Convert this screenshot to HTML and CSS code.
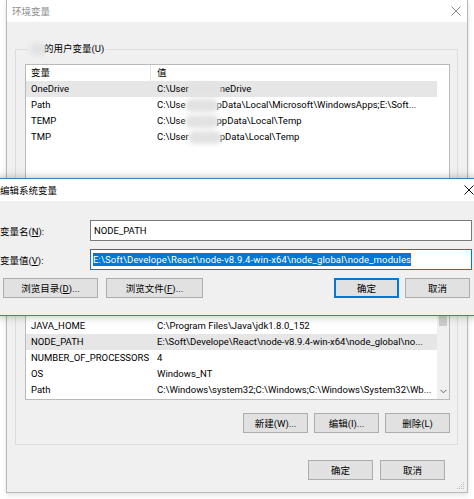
FILE: index.html
```html
<!DOCTYPE html>
<html lang="zh-CN">
<head>
    <meta charset="UTF-8">
    <title>环境变量</title>
    <link rel="stylesheet" href="styles.css">
</head>
<body>
    <!-- 环境变量 (背后的窗口) -->
    <div class="window env">
        <div class="titlebar">
            <span class="title">环境变量</span>
            <svg class="close" width="10" height="10" viewBox="0 0 10 10"><path d="M0.5 0.5 L9.5 9.5 M9.5 0.5 L0.5 9.5" stroke="#8a8a8a" stroke-width="1" fill="none"/></svg>
        </div>
        <div class="win-body">
            <fieldset class="group user-group">
                <legend><span class="blur blur-legend"></span>的用户变量(U)</legend>
                <div class="list user-list">
                    <div class="list-rows">
                        <div class="list-head"><span class="col-name">变量</span><span class="col-value">值</span></div>
                        <div class="row selected"><span class="col-name">OneDrive</span><span class="col-value">C:\User<span class="blur"></span>neDrive</span></div>
                        <div class="row"><span class="col-name">Path</span><span class="col-value">C:\Use<span class="blur"></span>pData\Local\Microsoft\WindowsApps;E:\Soft...</span></div>
                        <div class="row"><span class="col-name">TEMP</span><span class="col-value">C:\Use<span class="blur"></span>ppData\Local\Temp</span></div>
                        <div class="row"><span class="col-name">TMP</span><span class="col-value">C:\User<span class="blur"></span>pData\Local\Temp</span></div>
                    </div>
                </div>
                <div class="group-buttons">
                    <button>新建(N)...</button>
                    <button>编辑(E)...</button>
                    <button>删除(D)</button>
                </div>
            </fieldset>

            <fieldset class="group sys-group">
                <legend>系统变量(S)</legend>
                <div class="list sys-list">
                    <div class="list-rows">
                        <div class="list-head"><span class="col-name">变量</span><span class="col-value">值</span></div>
                        <div class="row"><span class="col-name">ComSpec</span><span class="col-value">C:\Windows\system32\cmd.exe</span></div>
                        <div class="row"><span class="col-name">DriverData</span><span class="col-value">C:\Windows\System32\Drivers\DriverData</span></div>
                        <div class="row"><span class="col-name">JAVA_HOME</span><span class="col-value">C:\Program Files\Java\jdk1.8.0_152</span></div>
                        <div class="row selected"><span class="col-name">NODE_PATH</span><span class="col-value">E:\Soft\Develope\React\node-v8.9.4-win-x64\node_global\no...</span></div>
                        <div class="row"><span class="col-name">NUMBER_OF_PROCESSORS</span><span class="col-value">4</span></div>
                        <div class="row"><span class="col-name">OS</span><span class="col-value">Windows_NT</span></div>
                        <div class="row"><span class="col-name">Path</span><span class="col-value">C:\Windows\system32;C:\Windows;C:\Windows\System32\Wb...</span></div>
                    </div>
                    <div class="scrollbar">
                        <span class="thumb"></span>
                        <svg class="arrow" width="7" height="5" viewBox="0 0 7 5"><path d="M0.5 0.8 L3.5 3.8 L6.5 0.8" stroke="#606060" stroke-width="1" fill="none"/></svg>
                    </div>
                </div>
                <div class="group-buttons">
                    <button>新建(W)...</button>
                    <button>编辑(I)...</button>
                    <button>删除(L)</button>
                </div>
            </fieldset>

            <div class="dialog-buttons">
                <button>确定</button>
                <button>取消</button>
            </div>
        </div>
        <svg class="grip" width="8" height="8" viewBox="0 0 8 8">
            <rect x="6" y="0" width="1" height="1" fill="#bbb"/>
            <rect x="4" y="2" width="1" height="1" fill="#bbb"/>
            <rect x="6" y="2" width="1" height="1" fill="#bbb"/>
            <rect x="2" y="4" width="1" height="1" fill="#bbb"/>
            <rect x="4" y="4" width="1" height="1" fill="#bbb"/>
            <rect x="6" y="4" width="1" height="1" fill="#bbb"/>
            <rect x="0" y="6" width="1" height="1" fill="#bbb"/>
            <rect x="2" y="6" width="1" height="1" fill="#bbb"/>
            <rect x="4" y="6" width="1" height="1" fill="#bbb"/>
            <rect x="6" y="6" width="1" height="1" fill="#bbb"/>
        </svg>
    </div>

    <!-- 编辑系统变量 (前面的窗口) -->
    <div class="window edit">
        <div class="titlebar">
            <span class="title">编辑系统变量</span>
            <svg class="close" width="10" height="10" viewBox="0 0 10 10"><path d="M0.5 0.5 L9.5 9.5 M9.5 0.5 L0.5 9.5" stroke="#111" stroke-width="1" fill="none"/></svg>
        </div>
        <div class="edit-body">
            <div class="field">
                <label>变量名(<u>N</u>):</label>
                <div class="textbox">NODE_PATH</div>
            </div>
            <div class="field">
                <label>变量值(<u>V</u>):</label>
                <div class="textbox focused"><span class="selection">E:\Soft\Develope\React\node-v8.9.4-win-x64\node_global\node_modules</span></div>
            </div>
            <div class="edit-buttons">
                <button class="browse-dir">浏览目录(<u>D</u>)...</button>
                <button class="browse-file">浏览文件(<u>F</u>)...</button>
                <button class="default">确定</button>
                <button>取消</button>
            </div>
        </div>
    </div>
</body>
</html>
```

FILE: styles.css
```css
* {
    box-sizing: border-box;
}

body {
    margin: 0;
    width: 474px;
    height: 499px;
    overflow: hidden;
    position: relative;
    background-color: #fff;
    font-family: Roboto, "Noto Sans CJK SC", sans-serif;
    font-size: 9.5px;
    color: #000;
}

button {
    font-family: inherit;
    font-size: 9.5px;
    color: #000;
    background-color: #e1e1e1;
    border: 1px solid #adadad;
    height: 20px;
    width: 65px;
    padding: 0;
}

.window {
    position: absolute;
    background-color: #f0f0f0;
}

.titlebar {
    height: 22px;
    background-color: #fff;
    display: flex;
    align-items: center;
    justify-content: space-between;
    flex-shrink: 0;
}

/* 环境变量 */
.env {
    left: 6px;
    top: 0;
    width: 462px;
    height: 493px;
    border: 1px solid #b9b9b9;
    border-top: none;
    box-shadow: 0 2px 5px rgba(0,0,0,0.12);
}

.env .titlebar {
    padding: 0 6px 0 5px;
}

.env .title {
    color: #8c8c8c;
}

.win-body {
    padding: 19px 9px 0 8px;
}

.group {
    border: 1px solid #dcdcdc;
    margin: 0;
    padding: 7px 7px 11px 9px;
    min-width: 0;
}

.group legend {
    padding: 0 2px;
    margin-left: 3px;
    line-height: 16px;
}

.user-group {
    padding-bottom: 9px;
}

.sys-group {
    margin-top: 13px;
}

.blur {
    display: inline-block;
    width: 34px;
    height: 13px;
    margin: 0 -2px 0 -1px;
    vertical-align: middle;
    border-radius: 7px;
    background-color: #e2e2e2;
    filter: blur(2px);
}

.blur-legend {
    width: 16px;
    margin-left: 0;
}

.list {
    background-color: #fff;
    border: 1px solid #bababa;
    display: flex;
    overflow: hidden;
}

.user-list {
    height: 130px;
}

.sys-list {
    height: 131px;
}

.list-rows {
    flex: 1;
    min-width: 0;
}

.list-head, .row {
    display: flex;
    height: 16px;
    line-height: 16px;
    white-space: nowrap;
}

.col-name {
    width: 131px;
    padding-left: 5px;
    flex-shrink: 0;
}

.list-head .col-name {
    position: relative;
}

.list-head .col-name::after {
    content: "";
    position: absolute;
    right: 6px;
    top: 0;
    bottom: 0;
    border-right: 1px solid #e5e5e5;
}

.row.selected {
    background-color: #e6e6e6;
}

.user-list .row.selected {
    margin-right: 12px;
}

.scrollbar {
    width: 12px;
    background-color: #f0f0f0;
    position: relative;
    flex-shrink: 0;
}

.thumb {
    position: absolute;
    left: 2px;
    right: 2px;
    top: 20px;
    height: 36px;
    background-color: #cdcdcd;
}

.arrow {
    position: absolute;
    left: 3px;
    bottom: 5px;
}

.group-buttons {
    display: flex;
    justify-content: flex-end;
    gap: 6px;
}

.user-group .group-buttons {
    margin-top: 9px;
}

.sys-group .group-buttons {
    margin-top: 13px;
}

.dialog-buttons {
    display: flex;
    justify-content: flex-end;
    gap: 7px;
    margin-top: 15px;
    padding-right: 13px;
}

.grip {
    position: absolute;
    right: 2px;
    bottom: 2px;
}

/* 编辑系统变量 */
.edit {
    left: -8px;
    top: 178px;
    width: 500px;
    height: 138px;
    border: 1px solid #2a82d6;
    box-shadow: 0 0 9px rgba(0,0,0,0.28);
}

.edit .titlebar {
    padding: 0 17px 0 7px;
}

.edit-body {
    padding: 19px 19px 0 7px;
}

.field {
    display: flex;
    align-items: center;
    margin-bottom: 8px;
}

.field label {
    width: 90px;
    flex-shrink: 0;
}

.textbox {
    flex: 1;
    height: 21px;
    line-height: 19px;
    padding-left: 3px;
    background-color: #fff;
    border: 1px solid #7a7a7a;
    white-space: nowrap;
}

.textbox.focused {
    border-color: #0078d7;
    padding-left: 2px;
}

.selection {
    background-color: #0078d7;
    color: #fff;
    padding: 1px 0;
    letter-spacing: 0.13px;
}

.edit-buttons {
    display: flex;
    gap: 6px;
    margin-top: 5px;
    padding: 0 2px 0 3px;
}

.edit-buttons .browse-dir {
    width: 95px;
    margin-right: 2px;
}

.edit-buttons .browse-file {
    width: 97px;
    margin-right: auto;
}

.edit-buttons .default {
    border-color: #0078d7;
    box-shadow: inset 0 0 0 1px #0078d7;
}
```
